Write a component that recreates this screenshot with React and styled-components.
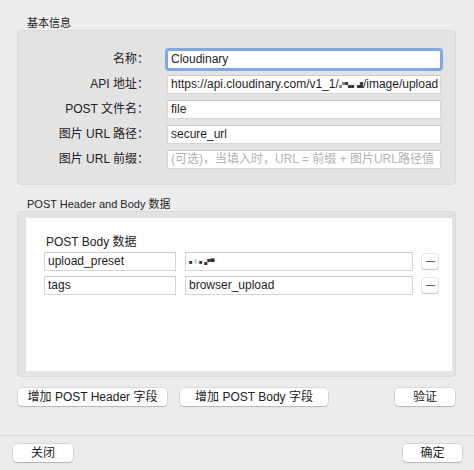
import React from "react";
import styled, { createGlobalStyle } from "styled-components";

const GlobalStyle = createGlobalStyle`
  body {
    margin: 0;
    background: #ececec;
    font-family: "Liberation Sans", "Noto Sans CJK SC", sans-serif;
    color: #222;
  }
`;

let Window = styled.div`
  width: 474px;
  height: 470px;
  display: flex;
  flex-direction: column;
  background: #ececec;
  overflow: hidden;
`;

let Content = styled.div`
  flex: 1;
  display: flex;
  flex-direction: column;
  padding: 0 18px 0 17px;
`;

let SectionTitle = styled.div`
  font-size: 11px;
  line-height: 13px;
  padding-left: 10px;
  margin-top: ${(props) => props.top}px;
  color: #262626;
`;

let GroupBox = styled.div`
  background: #e3e3e3;
  border: 1px solid #dadada;
  border-radius: 4px;
`;

// 기본 정보 폼
let Form = styled.div`
  display: grid;
  grid-template-columns: 134px 1fr;
  grid-auto-rows: 19px;
  column-gap: 15px;
  row-gap: 6px;
  padding: 19px 14px 15px 0;
`;

let Label = styled.div`
  font-size: 12px;
  line-height: 19px;
  text-align: right;
  white-space: nowrap;
  color: #222;
  padding-right: 3px;
`;

let Field = styled.div`
  box-sizing: border-box;
  height: 19px;
  background: #fff;
  border: 1px solid ${(props) => (props.focused ? "#7ea7e3" : "#d6d6d6")};
  border-top-color: ${(props) => (props.focused ? "#7ea7e3" : "#cbcbcb")};
  box-shadow: ${(props) =>
    props.focused ? "0 0 0 2px rgba(96, 148, 224, 0.75)" : "none"};
  border-radius: ${(props) => (props.focused ? "2px" : "0")};
  padding: 0 3px;
  font-size: 12px;
  line-height: 17px;
  white-space: nowrap;
  overflow: hidden;
  color: ${(props) => (props.placeholder ? "#b3b3b3" : "#1f1f1f")};
`;

let Blur = styled.span`
  font-size: 6px;
  color: ${(props) => props.color || "#333"};
  vertical-align: 1px;
`;

let WhiteArea = styled.div`
  background: #fff;
  margin: 6px 3px 5px 8px;
  height: 153px;
  box-sizing: border-box;
  padding: 18px 14px 0 18px;
`;

let BodyTitle = styled.div`
  font-size: 12px;
  line-height: 13px;
  padding-left: 2px;
  margin-bottom: 3px;
`;

let PairRows = styled.div`
  display: flex;
  flex-direction: column;
  gap: 5px;
`;

let PairRow = styled.div`
  display: grid;
  grid-template-columns: 132px 228px 16px;
  column-gap: 9px;
  align-items: center;
`;

let MinusButton = styled.div`
  width: 16px;
  height: 15px;
  background: #fff;
  border-radius: 3px;
  box-shadow: 0 0 0 0.5px rgba(0, 0, 0, 0.18), 0 1px 1px rgba(0, 0, 0, 0.14);
  display: flex;
  align-items: center;
  justify-content: center;
  &::before {
    content: "";
    width: 9px;
    height: 1px;
    background: #6b6b6b;
  }
`;

let ButtonRow = styled.div`
  display: flex;
  align-items: center;
  gap: 13px;
  margin: 11px 1px 0 1px;
`;

let Spacer = styled.div`
  flex: 1;
`;

let Button = styled.button`
  width: ${(props) => props.w}px;
  height: 18px;
  padding: 0;
  border: none;
  border-radius: 4px;
  background: #fff;
  box-shadow: 0 0 0 0.5px rgba(0, 0, 0, 0.16), 0 1px 1px rgba(0, 0, 0, 0.16);
  font-family: "Liberation Sans", "Noto Sans CJK SC", sans-serif;
  font-size: 12px;
  line-height: 18px;
  color: #222;
  white-space: nowrap;
`;

let BottomBar = styled.div`
  height: 34px;
  border-top: 1px solid #d9d9d9;
  background: #ebebeb;
  display: flex;
  align-items: center;
  justify-content: space-between;
  padding: 0 12px 0 13px;
`;

const fields = [
  { label: "名称：", value: "Cloudinary", focused: true },
  {
    label: "API 地址：",
    value: (
      <>
        https://api.cloudinary.com/v1_1/<Blur color="#888">▞</Blur>
        <Blur>▚▖▟</Blur>/image/upload
      </>
    ),
  },
  { label: "POST 文件名：", value: "file" },
  { label: "图片 URL 路径：", value: "secure_url" },
  {
    label: "图片 URL 前缀：",
    value: "(可选)，当填入时，URL = 前缀 + 图片URL路径值",
    placeholder: true,
  },
];

const pairs = [
  {
    key: "upload_preset",
    value: (
      <Blur>
        ■ <Blur color="#ccc">▮</Blur> ■ ▞▀
      </Blur>
    ),
  },
  { key: "tags", value: "browser_upload" },
];

function App() {
  return (
    <Window>
      <GlobalStyle />
      <Content>
        <SectionTitle top={17}>基本信息</SectionTitle>
        <GroupBox>
          <Form>
            {fields.map((f) => (
              <React.Fragment key={f.label}>
                <Label>{f.label}</Label>
                <Field focused={f.focused} placeholder={f.placeholder}>
                  {f.value}
                </Field>
              </React.Fragment>
            ))}
          </Form>
        </GroupBox>

        <SectionTitle top={13}>POST Header and Body 数据</SectionTitle>
        <GroupBox>
          <WhiteArea>
            <BodyTitle>POST Body 数据</BodyTitle>
            <PairRows>
              {pairs.map((p) => (
                <PairRow key={p.key}>
                  <Field>{p.key}</Field>
                  <Field>{p.value}</Field>
                  <MinusButton />
                </PairRow>
              ))}
            </PairRows>
          </WhiteArea>
        </GroupBox>

        <ButtonRow>
          <Button w={149}>增加 POST Header 字段</Button>
          <Button w={148}>增加 POST Body 字段</Button>
          <Spacer />
          <Button w={60}>验证</Button>
        </ButtonRow>
      </Content>
      <BottomBar>
        <Button w={60}>关闭</Button>
        <Button w={59}>确定</Button>
      </BottomBar>
    </Window>
  );
}

export default App;
